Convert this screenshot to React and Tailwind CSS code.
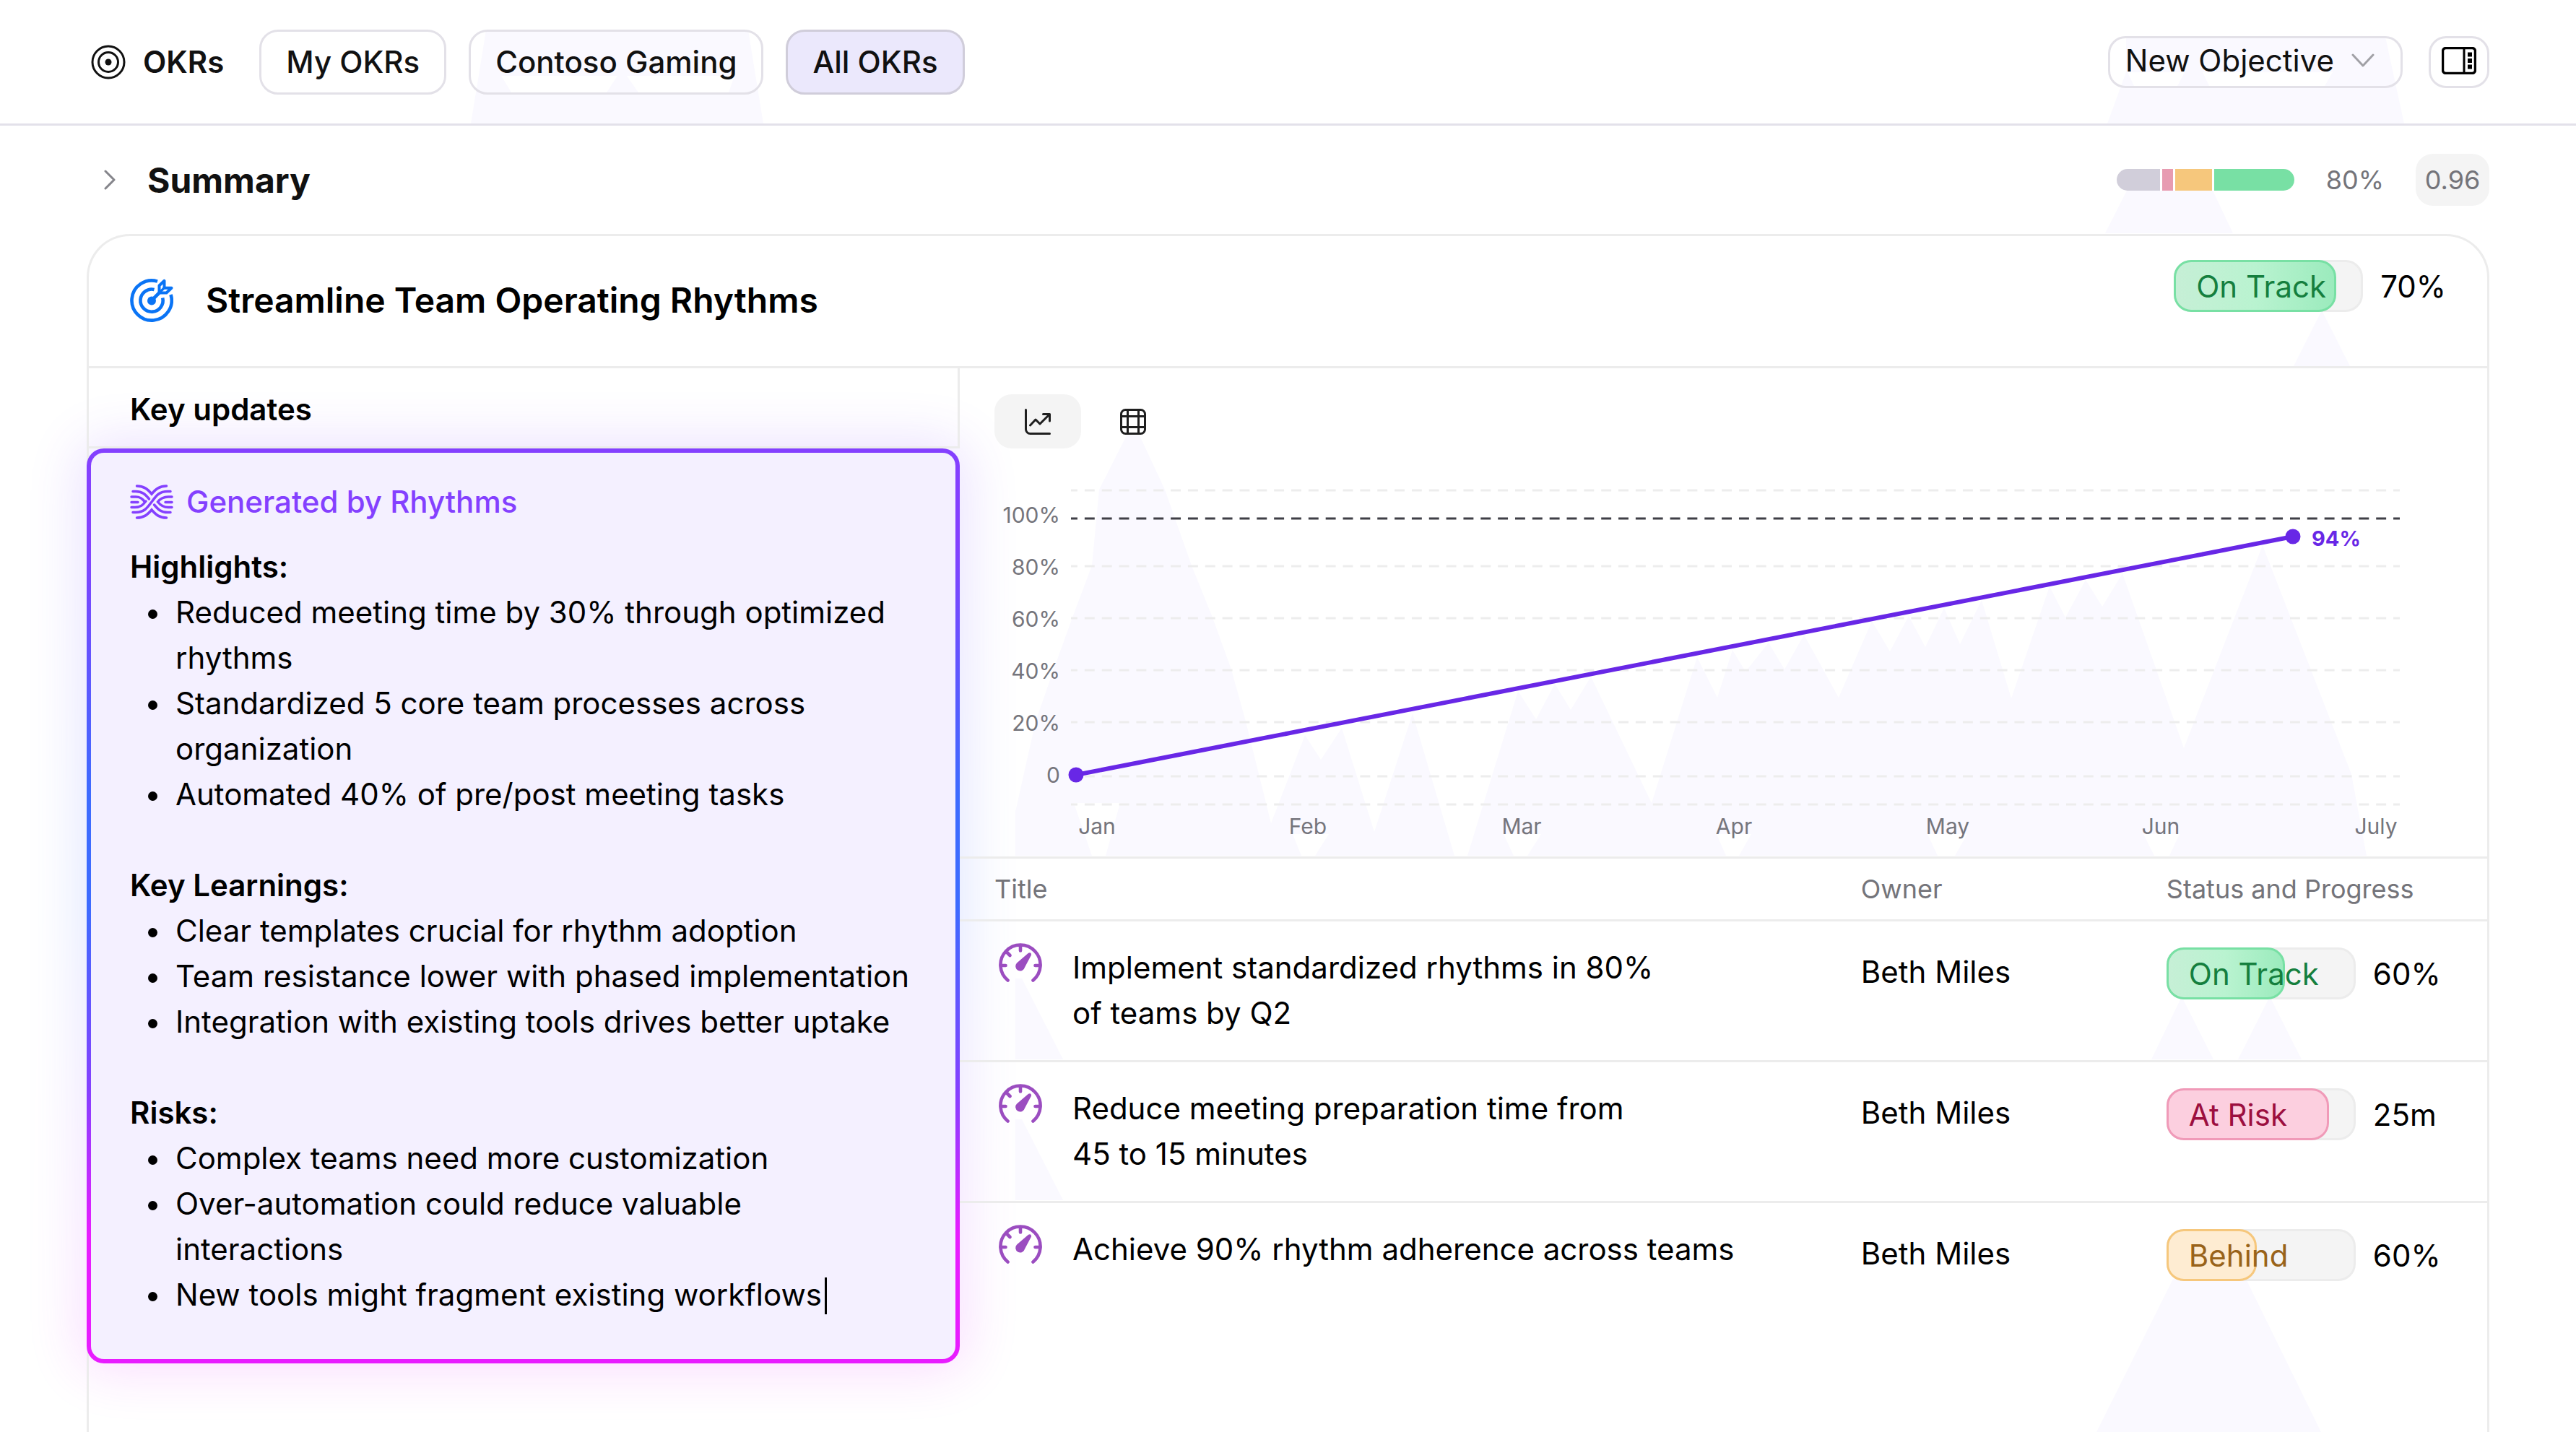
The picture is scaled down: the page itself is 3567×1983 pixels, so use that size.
import React from "react";

const TITLE = "Streamline Team Operating Rhythms";

const SECTIONS = [
  {
    title: "Highlights:",
    items: [
      "Reduced meeting time by 30% through optimized rhythms",
      "Standardized 5 core team processes across organization",
      "Automated 40% of pre/post meeting tasks",
    ],
  },
  {
    title: "Key Learnings:",
    items: [
      "Clear templates crucial for rhythm adoption",
      "Team resistance lower with phased implementation",
      "Integration with existing tools drives better uptake",
    ],
  },
  {
    title: "Risks:",
    items: [
      "Complex teams need more customization",
      "Over-automation could reduce valuable interactions",
      "New tools might fragment existing workflows",
    ],
  },
];

const TONES = {
  green: {
    fill: "border-[#78e0a4] bg-linear-to-r from-[#c6efd6] via-[#b9f3d0] to-[#9bebbd]",
    text: "text-[#157f3e]",
  },
  pink: { fill: "border-[#f09ab8] bg-[#fccfdf]", text: "text-[#9c0f3f]" },
  amber: { fill: "border-[#f6c77c] bg-[#feecd2]", text: "text-[#99631a]" },
};

const ROWS = [
  { title: ["Implement standardized rhythms in 80%", "of teams by Q2"], tone: "green", status: "On Track", fill: 62, value: "60%" },
  { title: ["Reduce meeting preparation time from", "45 to 15 minutes"], tone: "pink", status: "At Risk", fill: 86, value: "25m" },
  { title: ["Achieve 90% rhythm adherence across teams"], tone: "amber", status: "Behind", fill: 47, value: "60%" },
];

const Y_LABELS = [
  ["100%", 313],
  ["80%", 385],
  ["60%", 457],
  ["40%", 529],
  ["20%", 601],
  ["0", 673],
];
const GRID = [278, 383, 455, 527, 599, 674, 713];
const X_LABELS = [
  ["Jan", 190],
  ["Feb", 482],
  ["Mar", 778],
  ["Apr", 1072],
  ["May", 1368],
  ["Jun", 1663],
  ["July", 1961],
];

function Backdrop() {
  return (
    <svg aria-hidden="true" viewBox="0 0 3567 1983" preserveAspectRatio="xMinYMin meet" className="absolute inset-x-0 top-0 -z-10 w-full">
      <g fill="#faf9ff">
        <path d="M673 42H1036L1057 171H652Z" />
        <path d="M2944 51H3303L3329 171H2918L2944 100Z" />
        <path d="M2945 264H3064L3092 323H2915Z" />
        <path d="M3215 430L3176 507H3254Z" />
        <path d="M3021 1380L2979 1467H3065ZM3143 1380L3099 1467H3187Z" />
        <path d="M3009 1771H3110L3214 1983H2903Z" />
        <path d="M1406 1355H1415L1472 1467H1406ZM1406 1550H1415L1472 1662H1406Z" />
        <path d="M1560 603H1578L1613 678L1650 783L1679 855L1705 927L1725 999L1760 1140L1807 1018L1829 1052L1858 1008L1903 1152L1956 988L2014 1185H1406V1124L1434 999L1459 927L1485 855L1512 783L1522 678Z" />
        <path d="M2032 1185L2102 957L2127 996L2153 947L2175 983L2203 937L2287 1112L2350 910L2378 966L2399 900L2417 930L2449 890L2471 927L2498 879L2546 966L2592 860L2617 902L2643 853L2666 896L2692 842L2714 892L2744 831L2785 967L2838 812L2860 855L2888 803L2911 840L2939 794L3024 1036L3133 755L3256 1072L3277 1185Z" />
      </g>
      <g fill="#fff">
        <path d="M694 105H855L838 131H710ZM868 105H1017L1008 131H886Z" />
        <path d="M2946 100H3025L3014 121H2956ZM3050 100H3230L3218 121H3060Z" />
        <path d="M1487 1112H1551L1531 1185H1512Z" />
        <path d="M1790 1155H1840L1821 1185H1802ZM2082 1155H2134L2115 1185H2096ZM2377 1155H2425L2408 1185H2390ZM2669 1155H2724L2707 1185H2683ZM2968 1155H3018L3004 1185H2983Z" />
      </g>
    </svg>
  );
}

function RingsIcon() {
  return (
    <svg aria-hidden="true" viewBox="0 0 48 48" className="size-12 shrink-0" fill="none" stroke="currentColor" strokeWidth="3">
      <circle cx="24" cy="24" r="22" />
      <circle cx="24" cy="24" r="13.5" />
      <circle cx="24" cy="24" r="4.5" fill="currentColor" stroke="none" />
    </svg>
  );
}

function TargetIcon() {
  return (
    <svg aria-hidden="true" viewBox="0 0 60 60" className="size-15 shrink-0" fill="none" stroke="#0a74f5" strokeWidth="4.6">
      <path d="M38 3.6A27.6 27.6 0 1 0 56.5 22" />
      <path d="M33.5 14.9A15.6 15.6 0 1 0 45.2 26.5" />
      <circle cx="30" cy="30.5" r="6" fill="#0a74f5" stroke="none" />
      <path d="M30 30L40.5 19.5" />
      <path d="M40.5 19.5V9.5L47.5 2.8V12.8H57.5L50.5 19.5Z" strokeWidth="4" strokeLinejoin="round" />
      <path d="M41 19L47.5 12.5" strokeWidth="3.4" />
    </svg>
  );
}

function RhythmsIcon() {
  return (
    <svg aria-hidden="true" viewBox="0 0 60 48" className="h-12 w-15 shrink-0" fill="none" stroke="#8440ff" strokeWidth="3.5" strokeLinecap="round">
      <path d="M9.500 2C19 2 24 6 30 13C36 6 41 2 50.500 2" />
      <path d="M4 9.500H8C17 9.500 21 13.500 26.500 20" />
      <path d="M56 9.500H52C40 9.500 36 16 30 24S20 38.500 8 38.500H4" />
      <path d="M2 17H8C14 17 17 19 20.500 24" />
      <path d="M58 17H53C46 17 42 19.500 38.500 24C42 28.500 46 31.500 53 31.500H58" />
      <path d="M2 24.500H11M58 24.500H49" />
      <path d="M2 31.500H7C15 31.500 18 28 22 23" />
      <path d="M56 38.500H52C43 38.500 39 34.500 33.500 28" />
      <path d="M9.500 46C19 46 24 42 30 35C36 42 41 46 50.500 46" />
    </svg>
  );
}

function GaugeIcon() {
  return (
    <svg aria-hidden="true" viewBox="0 0 60 54" className="h-[54px] w-15 shrink-0" fill="none" stroke="#9b4dc0" strokeWidth="4.6" strokeLinecap="round">
      <path d="M12.5 51.5A27.6 27.6 0 1 1 47.500 51.500" />
      <path d="M30 3V10.500M3 31H9.500M57 31H50.500M11.500 13L15.500 17" />
      <path d="M41 13.800Q45 12 45 16.500L36 33.500A6.500 6.500 0 1 1 25 27.500Z" fill="#9b4dc0" stroke="none" />
    </svg>
  );
}

function StatusPill({ tone, label, fill, value }) {
  const t = TONES[tone];
  return (
    <div className="flex items-center gap-6">
      <div className="relative h-18 w-[262px] rounded-3xl border-3 border-[#ececec] bg-[#f4f4f4]">
        <div className={`absolute -inset-y-[3px] -left-[3px] rounded-3xl border-3 ${t.fill}`} style={{ width: `${fill + 2}%` }} />
        <span className={`relative flex h-full items-center pl-7 ${t.text}`}>{label}</span>
      </div>
      <span>{value}</span>
    </div>
  );
}

function ProgressChart() {
  return (
    <svg role="img" aria-label="Progress from 0 in January to 94% in July" viewBox="0 0 2115 565" className="block w-full" fontFamily="Inter, sans-serif" fontSize="30">
      <g transform="translate(0 -220)">
        <g stroke="#ededed" strokeWidth="3" strokeDasharray="14 10" strokeDashoffset="5">
          {GRID.map((y) => (
            <line key={y} x1="154" x2="1994" y1={y} y2={y} pathLength="1852" />
          ))}
        </g>
        <line x1="154" x2="1994" y1="317" y2="317" pathLength="1852" stroke="#3f3f46" strokeWidth="3" strokeDasharray="14 10" strokeDashoffset="5" />
        <g fill="#75757c" textAnchor="end">
          {Y_LABELS.map(([label, y]) => (
            <text key={label} x="139" y={y + 10}>{label}</text>
          ))}
        </g>
        <g fill="#75757c" textAnchor="middle">
          {X_LABELS.map(([label, x]) => (
            <text key={label} x={x} y="754">{label}</text>
          ))}
        </g>
        <g fill="#6827e6" stroke="none">
          <path d="M161 672L1846 342" stroke="#6827e6" strokeWidth="6" />
          <circle cx="161" cy="672" r="10.500" />
          <circle cx="1846" cy="342" r="10.500" />
          <text x="1872" y="355" fontSize="29" fontWeight="700">94%</text>
        </g>
      </g>
    </svg>
  );
}

const tab = "flex h-[90px] items-center rounded-[26px] border-3 px-[34px] font-medium";

export default function App() {
  return (
    <div className="relative isolate flex min-h-screen flex-col bg-white font-['Inter',sans-serif] text-[42px] leading-[63px] text-black">
      <Backdrop />

      <header className="flex h-[174px] items-center justify-between border-b-3 border-[#e3e1ea] px-[120px] text-[#111]">
        <nav className="flex items-center gap-[31px]">
          <div className="flex items-center gap-6 pr-[18px] pl-1.5 font-semibold">
            <RingsIcon />
            <span>OKRs</span>
          </div>
          <button className={`${tab} border-[#e3e1e8]`}>My OKRs</button>
          <button className={`${tab} border-[#e3e1e8]`}>Contoso Gaming</button>
          <button className={`${tab} border-[#d0cdda] bg-[#ebe8fc]`}>All OKRs</button>
        </nav>
        <div className="flex items-center gap-9">
          <button className="flex h-18 items-center gap-6 rounded-3xl border-3 border-[#e3e1e8] pr-9 pb-1 pl-[21px]">
            New Objective
            <svg aria-hidden="true" viewBox="0 0 32 20" className="h-5 w-8" fill="none" stroke="#a1a1a6" strokeWidth="3" strokeLinecap="round" strokeLinejoin="round">
              <path d="M2 2L16 17L30 2" />
            </svg>
          </button>
          <button aria-label="Toggle side panel" className="flex h-18 w-[84px] items-center justify-center rounded-3xl border-3 border-[#e3e1e8] pb-1">
            <svg aria-hidden="true" viewBox="0 0 48 38" className="h-[38px] w-12" fill="none" stroke="#000" strokeWidth="3">
              <rect x="1.500" y="1.500" width="45" height="35" rx="4.500" strokeWidth="3.500" />
              <path d="M31 1V37" />
              <path d="M36 7.500h6v6h-6zM36 16h6v6h-6zM36 24.500h6v6h-6z" fill="#000" stroke="none" />
            </svg>
          </button>
        </div>
      </header>

      <main className="flex flex-1 flex-col px-[120px]">
        <section className="flex h-[150px] items-center justify-between">
          <button className="flex items-center gap-11 pl-6 text-[48px] font-bold text-[#111]">
            <svg aria-hidden="true" viewBox="0 0 16 28" className="h-7 w-4" fill="none" stroke="#85858b" strokeWidth="3" strokeLinecap="round" strokeLinejoin="round">
              <path d="M2 2L14 14L2 26" />
            </svg>
            Summary
          </button>
          <div className="flex items-center gap-11 text-[36px] text-[#74747a]">
            <div className="flex h-[30px] w-[246px] gap-[3px] overflow-hidden rounded-full">
              <span className="flex-[60] bg-[#d1ceda]" />
              <span className="flex-[15] bg-[#e79bb1]" />
              <span className="flex-[51] bg-[#f6c77c]" />
              <span className="flex-[111] bg-[#78e0a4]" />
            </div>
            <span>80%</span>
            <span className="flex h-18 w-[102px] items-center justify-center rounded-3xl bg-[#f4f4f4]">0.96</span>
          </div>
        </section>

        <article className="flex flex-1 flex-col rounded-t-[60px] border-3 border-b-0 border-[#ececec]">
          <div className="flex h-[183px] items-start justify-between border-b-3 border-[#ececec] px-[57px]">
            <div className="flex items-center gap-[45px] pt-[57px]">
              <TargetIcon />
              <h1 className="text-[48px] font-semibold">{TITLE}</h1>
            </div>
            <div className="pt-[33px]">
              <StatusPill tone="green" label="On Track" fill={86} value="70%" />
            </div>
          </div>

          <div className="grid flex-1 grid-cols-[1206fr_2115fr]">
            <section>
              <h2 className="flex h-[111px] items-center border-r-3 border-b-3 border-[#ececec] px-[57px] pt-1 font-semibold">Key updates</h2>
              <div className="relative -ml-[3px]">
                <div className="absolute -inset-3 -z-10 rounded-[40px] bg-linear-to-b from-[#8440ff] via-[#3d6bff] to-[#e81cff] opacity-15 blur-[36px]" />
                <div className="rounded-[24px] bg-[linear-gradient(#8440ff_0%,#8440ff_10%,#3d6bff_38%,#3d6bff_50%,#8440ff_70%,#e81cff_86%,#e81cff_100%)] p-1.5">
                  <div className="rounded-[18px] bg-[#f4f0ff] px-[54px] pt-9 pb-[58px]">
                    <p className="flex items-center gap-[18px] pb-[27px] font-medium text-[#8440ff]">
                      <RhythmsIcon />
                      Generated by Rhythms
                    </p>
                    <div className="flex flex-col gap-[63px]">
                      {SECTIONS.map((s, i) => (
                        <div key={s.title}>
                          <h3 className="font-semibold">{s.title}</h3>
                          <ul className="pl-[63px]">
                            {s.items.map((item, j) => (
                              <li
                                key={item}
                                className="relative before:absolute before:top-7 before:-left-[38px] before:size-[13px] before:rounded-full before:bg-black"
                              >
                                {item}
                                {i === 2 && j === 2 && <span className="ml-1 inline-block h-[51px] w-[3px] bg-black align-[-12px]" />}
                              </li>
                            ))}
                          </ul>
                        </div>
                      ))}
                    </div>
                  </div>
                </div>
              </div>
            </section>

            <section>
              <div className="flex items-center gap-3 pt-9 pl-12">
                <button aria-label="Chart view" className="flex h-[75px] w-[120px] items-center justify-center rounded-3xl bg-[#f4f4f4]">
                  <svg aria-hidden="true" viewBox="0 0 36 36" className="size-9" fill="none" stroke="#1f1f1f" strokeWidth="3" strokeLinecap="round" strokeLinejoin="round">
                    <path d="M1.500 1.500V28.500A6 6 0 0 0 7.500 34.500H34.500M7.500 23L15 15L21 21L34 8M25.500 7.500H34.500V17" />
                  </svg>
                </button>
                <button aria-label="Table view" className="flex h-[75px] w-[120px] items-center justify-center rounded-3xl">
                  <svg aria-hidden="true" viewBox="0 0 36 36" className="size-9" fill="none" stroke="#1f1f1f" strokeWidth="3">
                    <rect x="1.500" y="1.500" width="33" height="33" rx="6" />
                    <path d="M10.500 1.500V34.500M25.500 1.500V34.500M1.500 10.500H34.500M1.500 25.500H34.500" />
                  </svg>
                </button>
              </div>
              <ProgressChart />
              <table className="w-full table-fixed border-t-3 border-[#ececec] text-left">
                <colgroup>
                  <col className="w-[59%]" />
                  <col className="w-[20%]" />
                  <col className="w-[21%]" />
                </colgroup>
                <thead>
                  <tr className="h-[87px] border-b-3 border-[#ececec] text-[36px] text-[#74747a]">
                    <th className="pl-12 font-normal">Title</th>
                    <th className="font-normal">Owner</th>
                    <th className="font-normal">Status and Progress</th>
                  </tr>
                </thead>
                <tbody>
                  {ROWS.map((r) => (
                    <tr key={r.status} className="h-[195px] border-b-3 border-[#ececec] align-top last:border-b-0">
                      <td className="pt-[30px] pl-[54px]">
                        <div className="flex gap-[42px]">
                          <GaugeIcon />
                          <div className="pt-0.5">
                            {r.title.map((line) => (
                              <div key={line}>{line}</div>
                            ))}
                          </div>
                        </div>
                      </td>
                      <td className="pt-[38px]">Beth Miles</td>
                      <td className="pt-9">
                        <StatusPill tone={r.tone} label={r.status} fill={r.fill} value={r.value} />
                      </td>
                    </tr>
                  ))}
                </tbody>
              </table>
            </section>
          </div>
        </article>
      </main>
    </div>
  );
}
